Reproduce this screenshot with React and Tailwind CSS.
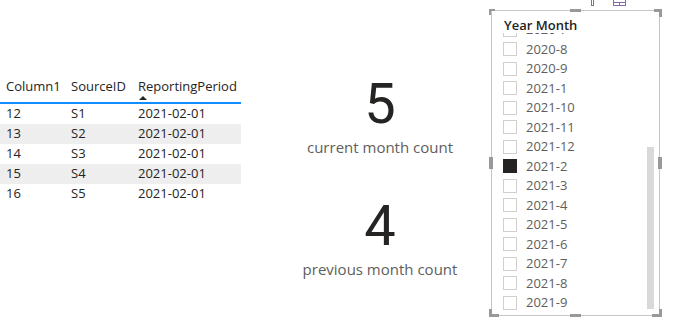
import React from 'react';

const rows = [
  { c: '12', s: 'S1', d: '2021-02-01' },
  { c: '13', s: 'S2', d: '2021-02-01' },
  { c: '14', s: 'S3', d: '2021-02-01' },
  { c: '15', s: 'S4', d: '2021-02-01' },
  { c: '16', s: 'S5', d: '2021-02-01' },
];

const months = [
  '2020-7', '2020-8', '2020-9', '2021-1', '2021-10', '2021-11', '2021-12',
  '2021-2', '2021-3', '2021-4', '2021-5', '2021-6', '2021-7', '2021-8', '2021-9',
];

function Card({ value, label, mt }) {
  return (
    <div className={`flex flex-col items-center ${mt}`}>
      <div className="text-[56px] leading-[56px] text-[#252423] font-['Roboto',sans-serif]">{value}</div>
      <div className="mt-[5px] text-[15px] leading-[20px] text-[#605e5c] font-['Open_Sans',sans-serif]">{label}</div>
    </div>
  );
}

export default function App() {
  return (
    <div className="relative w-[678px] h-[328px] bg-white overflow-hidden flex font-['Open_Sans',sans-serif]">
      {/* table */}
      <div className="w-[241px] mt-[76px] shrink-0 text-[13px] text-[#252423]">
        <div className="flex h-[28px] border-b-2 border-[#118dff]">
          <div className="w-[71px] pl-[6px] leading-[20px]">Column1</div>
          <div className="w-[67px] leading-[20px]">SourceID</div>
          <div className="flex-1 flex flex-col">
            <span className="leading-[20px]">ReportingPeriod</span>
            <span className="ml-[1px] w-0 h-0 border-l-[4px] border-r-[4px] border-b-[4px] border-l-transparent border-r-transparent border-b-[#252423]"></span>
          </div>
        </div>
        {rows.map((r, i) => (
          <div key={i} className={`flex h-[20px] items-center ${i % 2 === 1 ? 'bg-[#eeeeee]' : ''}`}>
            <div className="w-[71px] pl-[6px]">{r.c}</div>
            <div className="w-[67px]">{r.s}</div>
            <div className="flex-1">{r.d}</div>
          </div>
        ))}
      </div>

      {/* cards */}
      <div className="ml-[29px] w-[220px] shrink-0 flex flex-col">
        <Card value="5" label="current month count" mt="mt-[76px]" />
        <Card value="4" label="previous month count" mt="mt-[41px]" />
      </div>

      {/* slicer */}
      <div className="relative mt-[10px] ml-[1px] w-[169px] h-[306px] shrink-0 border border-[#c8c6c4] flex flex-col">
        <div className="pl-[12px] pt-[4px] h-[22px] text-[13px] leading-[20px] font-semibold text-[#252423]">Year Month</div>
        <div className="relative flex-1 overflow-hidden mb-[4px]">
          <div className="-mt-[13px] pl-[11px]">
            {months.map((m) => (
              <div key={m} className="h-[19.5px] flex items-center gap-[9px]">
                <span className={`w-[14px] h-[14px] border ${m === '2021-2' ? 'bg-[#252423] border-[#252423]' : 'border-[#d2d0ce]'}`}></span>
                <span className="text-[13px] text-[#605e5c]">{m}</span>
              </div>
            ))}
          </div>
          <div className="absolute right-[5px] top-[114px] w-[7px] h-[162px] bg-[#dad9d7]"></div>
        </div>

        {/* selection handles */}
        <span className="absolute -left-[3px] -top-[2px] w-[6px] h-[2px] bg-[#999]"></span>
        <span className="absolute -left-[3px] -top-[2px] w-[2px] h-[6px] bg-[#999]"></span>
        <span className="absolute left-[78px] -top-[2px] w-[11px] h-[3px] bg-[#999]"></span>
        <span className="absolute -right-[3px] -top-[2px] w-[8px] h-[3px] bg-[#999]"></span>
        <span className="absolute -right-[3px] -top-[2px] w-[3px] h-[8px] bg-[#999]"></span>
        <span className="absolute -right-[3px] top-[146px] w-[4px] h-[12px] bg-[#999]"></span>
        <span className="absolute -left-[3px] top-[146px] w-[4px] h-[12px] bg-[#999]"></span>
        <span className="absolute -left-[3px] -bottom-[2px] w-[10px] h-[3px] bg-[#999]"></span>
        <span className="absolute -left-[3px] -bottom-[2px] w-[3px] h-[8px] bg-[#999]"></span>
        <span className="absolute left-[78px] -bottom-[2px] w-[11px] h-[3px] bg-[#999]"></span>
        <span className="absolute -right-[3px] -bottom-[2px] w-[10px] h-[3px] bg-[#999]"></span>
        <span className="absolute -right-[3px] -bottom-[2px] w-[3px] h-[8px] bg-[#999]"></span>

        {/* header icons (cut off) */}
        <span className="absolute left-[99px] -top-[12px] w-[3px] h-[7px] border border-[#8a6a9c]"></span>
        <span className="absolute left-[121px] -top-[12px] w-[13px] h-[7px] border border-[#8a6a9c] flex flex-col">
          <span className="mt-auto h-[3px] border-t border-[#8a6a9c] flex"><span className="w-1/2 border-r border-[#8a6a9c]"></span></span>
        </span>
      </div>
    </div>
  );
}
